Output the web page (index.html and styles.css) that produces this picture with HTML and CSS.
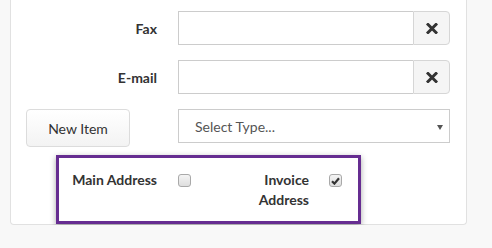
FILE: index.html
```html
<!DOCTYPE html>
<html lang="en">
<head>
    <meta charset="UTF-8">
    <title>Contact details</title>
    <link rel="stylesheet" href="styles.css">
</head>
<body>
    <div class="panel">
        <!-- Fax -->
        <div class="form-row">
            <label class="form-label" for="fax">Fax</label>
            <div class="input-group">
                <input type="text" id="fax" class="form-input">
                <span class="addon">
                    <svg width="12" height="11" viewBox="0 0 12 11"><path d="M2 1.5 L10 9.5 M10 1.5 L2 9.5" stroke="#333" stroke-width="3" stroke-linecap="square"/></svg>
                </span>
            </div>
        </div>

        <!-- E-mail -->
        <div class="form-row">
            <label class="form-label" for="email">E-mail</label>
            <div class="input-group">
                <input type="text" id="email" class="form-input">
                <span class="addon">
                    <svg width="12" height="11" viewBox="0 0 12 11"><path d="M2 1.5 L10 9.5 M10 1.5 L2 9.5" stroke="#333" stroke-width="3" stroke-linecap="square"/></svg>
                </span>
            </div>
        </div>

        <!-- New item / type -->
        <div class="form-row form-row-top">
            <div class="form-label-slot">
                <button class="btn-new">New Item</button>
            </div>
            <div class="select-box">
                <span>Select Type...</span>
                <span class="caret"></span>
            </div>
        </div>

        <!-- Address flags -->
        <div class="flags-box">
            <span class="flag-label flag-main">Main Address</span>
            <span class="check"></span>
            <span class="flag-label flag-invoice">Invoice Address</span>
            <span class="check checked">
                <svg width="9" height="8" viewBox="0 0 9 8"><path d="M1 4.2 L3.4 6.6 L8 1.2" stroke="#333" stroke-width="2.2" fill="none"/></svg>
            </span>
        </div>
    </div>
</body>
</html>
```

FILE: styles.css
```css
body {
    font-family: Lato, "Open Sans", sans-serif;
    font-size: 14px;
    color: #333;
    background-color: #f8f8f8;
    margin: 0;
}
.panel {
    box-sizing: border-box;
    width: 457px;
    height: 225px;
    margin-left: 10px;
    padding-top: 11px;
    background-color: #ffffff;
    border: 1px solid #e1e1e1;
    border-top: none;
    border-radius: 0 0 4px 4px;
}
.form-row {
    display: flex;
    align-items: center;
    margin-bottom: 15px;
}
.form-row-top {
    align-items: flex-start;
    margin-bottom: 0;
}
.form-label {
    box-sizing: border-box;
    width: 167px;
    padding-right: 21px;
    text-align: right;
    font-weight: bold;
}
.form-label-slot {
    width: 167px;
}
.input-group {
    display: flex;
    width: 272px;
    height: 34px;
}
.form-input {
    box-sizing: border-box;
    flex: 1;
    height: 34px;
    margin: 0;
    border: 1px solid #cccccc;
    border-right: none;
    outline: none;
}
.addon {
    box-sizing: border-box;
    width: 37px;
    height: 34px;
    display: flex;
    align-items: center;
    justify-content: center;
    background-color: #f5f5f5;
    border: 1px solid #d6d6d6;
    border-radius: 0 4px 4px 0;
}
.btn-new {
    box-sizing: border-box;
    margin-left: 15px;
    width: 104px;
    height: 38px;
    font-family: Lato, "Open Sans", sans-serif;
    font-size: 14px;
    color: #333;
    background: linear-gradient(#ffffff, #f3f3f3);
    border: 1px solid #dcdcdc;
    border-radius: 4px;
    padding: 0;
}
.select-box {
    box-sizing: border-box;
    width: 272px;
    height: 34px;
    padding: 0 6px 0 16px;
    display: flex;
    align-items: center;
    justify-content: space-between;
    color: #555;
    border: 1px solid #cccccc;
}
.caret {
    width: 0;
    height: 0;
    margin-top: 2px;
    border-left: 3px solid transparent;
    border-right: 3px solid transparent;
    border-top: 5px solid #555;
}
.flags-box {
    box-sizing: border-box;
    width: 305px;
    height: 69px;
    margin: 8px 0 0 45px;
    padding: 12px 0 0 13px;
    display: flex;
    align-items: flex-start;
    line-height: 20px;
    border: 3px solid #662d91;
    box-shadow: 0 2px 6px rgba(0, 0, 0, 0.35);
}
.flag-label {
    width: 85px;
    text-align: right;
    font-weight: bold;
}
.flag-main {
    margin-right: 21px;
}
.flag-invoice {
    margin-left: 33px;
    margin-right: 20px;
}
.check {
    box-sizing: border-box;
    width: 13px;
    height: 13px;
    margin-top: 4px;
    display: flex;
    align-items: center;
    justify-content: center;
    background: linear-gradient(#f4f4f4, #dedede);
    border: 1px solid #a9a9a9;
    border-radius: 3px;
}
```
